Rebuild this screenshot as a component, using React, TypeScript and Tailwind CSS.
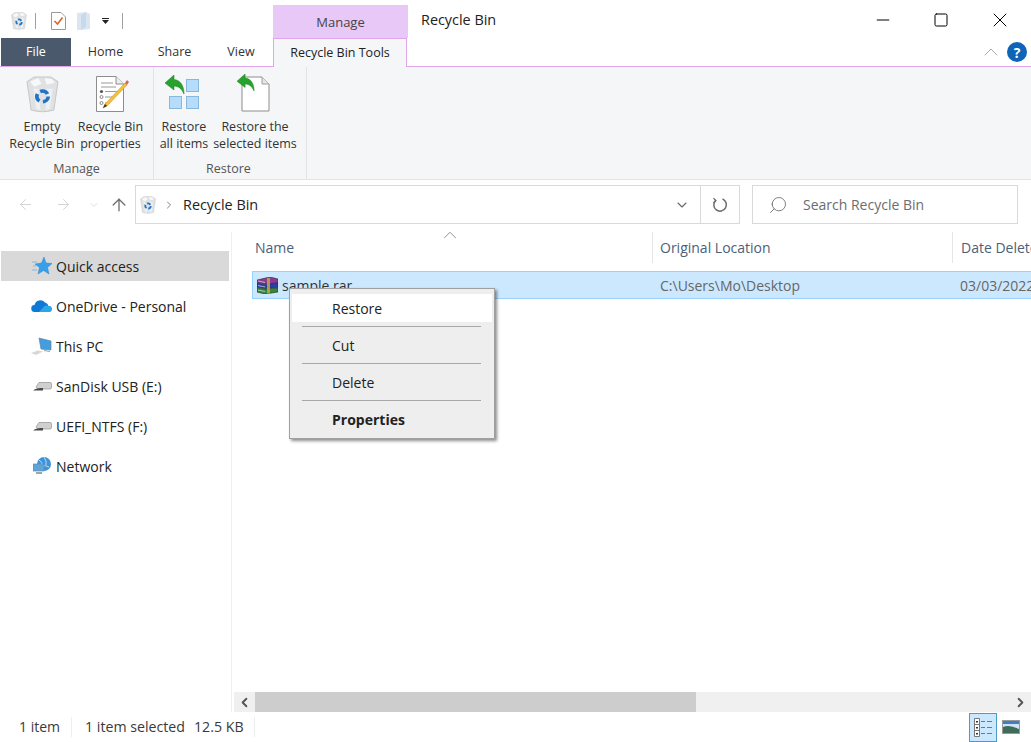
import React from "react";
import { ArrowLeft, ArrowRight, ArrowUp, ChevronDown, ChevronRight, ChevronLeft, ChevronUp, Search, X, Minus, Square } from "lucide-react";

const FONT = "font-['Open_Sans','Noto_Sans',sans-serif]";

const RecycleBin: React.FC<{ w: number; h: number }> = ({ w, h }) => (
  <svg width={w} height={h} viewBox="0 0 32 38" preserveAspectRatio="none">
    <path d="M1 6 L8 1 L24 1 L31 6 L27 35 Q16 38.5 5 35 Z" fill="#dfe1e3" stroke="#c6c8ca" strokeWidth="1" />
    <path d="M4 6 L12 2 L15 8 L8 11 Z M18 2 L25 3 L28 7 L20 9 Z" fill="#f7f8f9" />
    <path d="M7 13 L10 34 L14 35 L12 13 Z M20 13 L19 35 L23 34 L26 13 Z" fill="#eff0f1" />
    <circle cx="16" cy="21" r="5.5" fill="none" stroke="#1f74c9" strokeWidth="3.6" strokeDasharray="8 3.5" />
  </svg>
);

const PropertiesIcon: React.FC = () => (
  <svg width="36" height="38" viewBox="0 0 36 38">
    <path d="M1.5 1.5 H21 L28.5 9 V36.5 H1.5 Z" fill="#fff" stroke="#8d8d8d" />
    <path d="M21 1.5 V9 H28.5" fill="#eee" stroke="#8d8d8d" />
    <path d="M6 8 H18 M6 12 H21 M10 16.5 H24 M10 22 H20 M10 28 H15" stroke="#9a9a9a" />
    <circle cx="6.5" cy="16.5" r="1.6" fill="#555" />
    <circle cx="6.5" cy="22" r="1.5" fill="#fff" stroke="#888" />
    <circle cx="6.5" cy="28" r="1.5" fill="#fff" stroke="#888" />
    <path d="M32 10 L12 31 L8 33 L10 29 L30 8 Z" fill="#f4c23c" stroke="#c9952a" strokeWidth="0.6" />
    <path d="M30 8 L32 10 L34 7 L32 5 Z" fill="#d9665f" />
    <path d="M10 29 L8 33 L12 31 Z" fill="#333" />
  </svg>
);

const GreenArrow: React.FC<{ w: number; h: number }> = ({ w, h }) => (
  <svg width={w} height={h} viewBox="0 0 20 20">
    <path d="M0 8 L9 0 L9 4.5 C15 5 19 10 19 19 C16.5 13.5 14 11.5 9 11 L9 15 Z" fill="#27a32d" stroke="#1c7f22" strokeWidth="0.5" />
  </svg>
);

const RibbonTile: React.FC = () => <span className="block w-[13px] h-[13px] bg-[#b5dcfb] border border-[#8ab8dd]" />;

const RibbonButton: React.FC<{ icon: React.ReactNode; lines: [string, string]; w: string }> = ({ icon, lines, w }) => (
  <div className={`flex flex-col items-center ${w}`}>
    <div className="h-[42px] flex items-center justify-center">{icon}</div>
    <span className="mt-[3px] text-[12.5px] leading-[17px] text-[#333] whitespace-nowrap">{lines[0]}</span>
    <span className="text-[12.5px] leading-[17px] text-[#333] whitespace-nowrap">{lines[1]}</span>
  </div>
);

const DriveIcon: React.FC = () => (
  <svg width="19" height="9" viewBox="0 0 19 9">
    <path d="M6 .5 H17 Q18.5 .5 18.5 2 V5.5 Q18.5 7 17 7 H5 L3 5 Z" fill="#d0d0d0" stroke="#909090" strokeWidth="0.7" />
    <path d="M0 8.5 Q3 5.5 10 6 V8.5 Z" fill="#4a4a4a" />
  </svg>
);

const sidebarItems: { label: string; icon: React.ReactNode }[] = [
  {
    label: "Quick access",
    icon: (
      <svg width="20" height="18" viewBox="0 0 20 18">
        <path d="M12 0 L14 6 L20 6.5 L15.5 10.5 L17 17 L11.5 13.5 L6 17 L7.5 10.5 L3 7 L9.5 6 Z" fill="#38a0ea" stroke="#2b86c8" strokeWidth="0.5" />
        <path d="M0 5 H5 M1 9 H4 M0 13 H5" stroke="#8bb8dc" />
      </svg>
    ),
  },
  {
    label: "OneDrive - Personal",
    icon: (
      <svg width="21" height="14" viewBox="0 0 21 14">
        <path d="M4 13 A3.5 3.5 0 0 1 3.5 6 A6 6 0 0 1 14 3.5 A4.5 4.5 0 0 1 17.5 7 A3 3 0 0 1 18 13 Z" fill="#0f78d4" />
        <path d="M8 13 L13.5 7 A4.5 4.5 0 0 1 17.5 7 A3 3 0 0 1 20.5 11 L19 13 Z" fill="#28a8ea" />
      </svg>
    ),
  },
  {
    label: "This PC",
    icon: (
      <svg width="21" height="18" viewBox="0 0 21 18">
        <path d="M8 1 L20 4 L20 13 L10 12 Z" fill="#3f9fe2" stroke="#6a8296" strokeWidth="0.7" />
        <path d="M0 16 L7 13.5 L12 14.5 L5 18 Z" fill="#d5d7d9" />
        <path d="M13 13 L19 14 L19 15 L13 14 Z" fill="#9aa0a5" />
      </svg>
    ),
  },
  { label: "SanDisk USB (E:)", icon: <DriveIcon /> },
  { label: "UEFI_NTFS (F:)", icon: <DriveIcon /> },
  {
    label: "Network",
    icon: (
      <svg width="19" height="18" viewBox="0 0 19 18">
        <circle cx="11" cy="7" r="7" fill="#3f93d6" />
        <path d="M6 3 Q10 5 9 9 Q13 8 16 10 M11 0 Q14 4 13 8" stroke="#b5dcf5" fill="none" />
        <rect x="0" y="7" width="11" height="7" fill="#5aa5dc" stroke="#6f8ba0" strokeWidth="0.7" />
        <path d="M3 16 H9" stroke="#9aa5ae" strokeWidth="2" />
      </svg>
    ),
  },
];

const RarIcon: React.FC = () => (
  <svg width="21" height="17" viewBox="0 0 21 17">
    <path d="M0 3 L13 0 L21 2 L21 6 L8 7 L0 5.5 Z" fill="#8a3c92" stroke="#2e2430" strokeWidth="0.6" />
    <path d="M0 6 L8 7.5 L21 6 L21 10.5 L8 11.5 L0 10 Z" fill="#2a3fa8" stroke="#22243a" strokeWidth="0.6" />
    <path d="M0 10.5 L8 12 L21 11 L21 15 L8 17 L0 15 Z" fill="#2f8a3a" stroke="#1f2a20" strokeWidth="0.6" />
    <path d="M10 1 H13 V16.5 H10 Z" fill="#c9a24a" opacity="0.85" />
    <path d="M1 4 L8 5.5 M1 8.5 L8 10 M1 13 L8 14.5" stroke="#e0e0e6" strokeWidth="0.7" />
  </svg>
);

export default function App() {
  return (
    <div className={`relative w-[1031px] h-[742px] bg-white overflow-hidden flex flex-col ${FONT} text-[14px]`}>
      {/* Title bar */}
      <div className="h-[38px] flex items-stretch shrink-0">
        <div className="w-[273px] flex items-center pl-[11px] pt-[3px]">
          <RecycleBin w={16} h={18} />
          <span className="ml-[8px] w-px h-[16px] bg-[#a0a0a0]" />
          <svg className="ml-[15px]" width="15" height="18" viewBox="0 0 15 18">
            <path d="M.5.5 H10 L14.5 5 V17.5 H.5 Z" fill="#fff" stroke="#9a9a9a" />
            <path d="M3.5 9 L6.5 12 L11.5 5.5" stroke="#e0602c" strokeWidth="1.6" fill="none" />
          </svg>
          <svg className="ml-[11px]" width="13" height="18" viewBox="0 0 13 18">
            <path d="M0 1 L9 0 L13 2 V17 L4 18 H0 Z" fill="#dce6f3" />
            <path d="M9 0 V15 L4 18 V3 Z" fill="#c9d9ec" />
          </svg>
          <svg className="ml-[12px]" width="7" height="6" viewBox="0 0 7 6">
            <path d="M0 0 H7 V1 H0 Z M0 2 H7 L3.5 6 Z" fill="#222" />
          </svg>
          <span className="ml-[13px] w-px h-[16px] bg-[#a0a0a0]" />
        </div>
        <div className="mt-[5px] pt-[2px] w-[135px] bg-[#e8c8f6] flex items-center justify-center text-[13px] text-[#444]">Manage</div>
        <div className="ml-[13px] flex items-center text-[14.4px] text-[#222] pt-[1px]">Recycle Bin</div>
        <div className="ml-auto flex items-center pr-[19px] pt-[1px]">
          <Minus size={20} strokeWidth={1.2} className="text-black" />
          <Square size={16} strokeWidth={1.5} className="ml-[40px] text-black" />
          <X size={24} strokeWidth={1} className="ml-[39px] text-black" />
        </div>
      </div>

      {/* Tabs */}
      <div className="h-[29px] flex shrink-0 border-b border-[#dfa6ea] pl-[1px] text-[12.5px] text-[#333]">
        <div className="w-[70px] h-[28px] pt-[1px] bg-[#4a5a6c] text-white flex items-center justify-center">File</div>
        <div className="w-[69px] pt-[1px] flex items-center justify-center">Home</div>
        <div className="w-[69px] pt-[1px] flex items-center justify-center">Share</div>
        <div className="w-[64px] pt-[1px] flex items-center justify-center">View</div>
        <div className="w-[134px] h-[29px] bg-[#f5f6f7] border-x border-t border-[#dfa6ea] flex items-center justify-center text-[#222]">Recycle Bin Tools</div>
        <div className="ml-auto flex items-center pr-[4px]">
          <ChevronUp size={24} strokeWidth={1} className="text-[#aaa]" />
          <span className="ml-[4px] w-[20px] h-[20px] rounded-full bg-[#0f64b8] text-white text-[14px] font-bold flex items-center justify-center">?</span>
        </div>
      </div>

      {/* Ribbon */}
      <div className="h-[113px] shrink-0 flex bg-[#f5f6f7] border-b border-[#e4e4e4]">
        <div className="w-[154px] pt-[6px] pb-[2px] flex flex-col items-center border-r border-[#e2e3e4]">
          <div className="flex w-full pl-[9px]">
            <RibbonButton w="w-[66px]" icon={<RecycleBin w={33} h={37} />} lines={["Empty", "Recycle Bin"]} />
            <RibbonButton w="w-[71px]" icon={<div className="ml-[5px]"><PropertiesIcon /></div>} lines={["Recycle Bin", "properties"]} />
          </div>
          <span className="mt-auto text-[12.5px] text-[#555] leading-[17px]">Manage</span>
        </div>
        <div className="w-[153px] pt-[6px] pb-[2px] pr-[3px] flex flex-col items-center border-r border-[#e2e3e4]">
          <div className="flex w-full pl-[3px]">
            <RibbonButton
              w="w-[54px]"
              lines={["Restore", "all items"]}
              icon={
                <div className="relative w-[40px] h-[36px]">
                  <div className="absolute right-[5px] bottom-[3px] grid grid-cols-2 gap-[4px]">
                    <span className="block w-[13px] h-[13px]" />
                    <RibbonTile />
                    <RibbonTile />
                    <RibbonTile />
                  </div>
                  <div className="absolute left-[1px] -top-[1px]">
                    <GreenArrow w={20} h={20} />
                  </div>
                </div>
              }
            />
            <RibbonButton
              w="w-[88px]"
              lines={["Restore the", "selected items"]}
              icon={
                <div className="relative w-[36px] h-[38px]">
                  <svg className="absolute right-[3px] bottom-[1px]" width="29" height="36" viewBox="0 0 29 36">
                    <path d="M1 1 H21 L28 8 V35 H1 Z" fill="#fff" stroke="#8d8d8d" />
                    <path d="M21 1 V8 H28" fill="#e6e6e6" stroke="#a0a0a0" />
                  </svg>
                  <div className="absolute left-0 -top-[1px]">
                    <GreenArrow w={18} h={18} />
                  </div>
                </div>
              }
            />
          </div>
          <span className="mt-auto text-[12.5px] text-[#555] leading-[17px]">Restore</span>
        </div>
      </div>

      {/* Address row */}
      <div className="h-[52px] shrink-0 flex items-start pt-[5px] pl-[17px]">
        <div className="h-[39px] w-[118px] flex items-center">
          <ArrowLeft size={17} strokeWidth={1.4} className="text-[#d2d2d2]" />
          <ArrowRight size={17} strokeWidth={1.4} className="ml-[21px] text-[#d2d2d2]" />
          <ChevronDown size={12} strokeWidth={1.4} className="ml-[16px] text-[#d2d2d2]" />
          <ArrowUp size={20} strokeWidth={1.6} className="ml-[9px] text-[#707070]" />
        </div>
        <div className="h-[39px] w-[605px] border border-[#d9d9d9] flex items-center pl-[4px]">
          <RecycleBin w={16} h={18} />
          <ChevronRight size={12} strokeWidth={1.5} className="ml-[7px] text-[#555]" />
          <span className="ml-[8px] text-[14.4px] text-[#222]">Recycle Bin</span>
          <ChevronDown size={16} strokeWidth={1.6} className="ml-auto mr-[10px] text-[#666]" />
          <div className="w-[39px] h-full border-l border-[#d9d9d9] flex items-center justify-center">
            <svg width="16" height="16" viewBox="0 0 16 16" fill="none" stroke="#6a6a6a" strokeWidth="1.5">
              <path d="M10.5 2 A6.3 6.3 0 1 1 3.6 3.4" />
              <path d="M1.5 1.2 L4 3.6 L1.5 6" strokeWidth="1.2" />
            </svg>
          </div>
        </div>
        <div className="ml-[12px] h-[39px] w-[266px] border border-[#d9d9d9] flex items-center pl-[15px]">
          <Search size={20} strokeWidth={1} className="text-[#666] -scale-x-100" />
          <span className="ml-[15px] text-[14px] text-[#6d6d6d]">Search Recycle Bin</span>
        </div>
      </div>

      {/* Body */}
      <div className="flex-1 min-h-0 flex">
        <div className="w-[232px] shrink-0 border-r border-[#f0f0f0] pt-[19px] pl-[1px] pr-[2px]">
          {sidebarItems.map((item, i) => (
            <div key={item.label} className={`h-[30px] mb-[10px] flex items-center ${i === 0 ? "bg-[#d9d9d9]" : ""}`}>
              <div className="w-[55px] flex justify-end pr-[4px] shrink-0">{item.icon}</div>
              <span className="text-[14px] text-[#222]">{item.label}</span>
            </div>
          ))}
        </div>
        <div className="flex-1 min-w-0 flex flex-col relative">
          <div className="flex-1 min-h-0 pl-[20px] overflow-hidden">
            <div className="relative flex h-[31px] items-center text-[14px] text-[#4c607a] w-[900px]">
              <ChevronUp size={22} strokeWidth={1} className="absolute left-[187px] -top-[8px] text-[#888]" />
              <div className="w-[401px] h-full pl-[3px] flex items-center border-r border-[#e5e5e5] shrink-0">Name</div>
              <div className="w-[300px] h-full pl-[7px] flex items-center border-r border-[#e5e5e5] shrink-0">Original Location</div>
              <div className="pl-[8px] whitespace-nowrap">Date Deleted</div>
            </div>
            <div className="mt-[8px] h-[28px] w-[820px] bg-[#cce8ff] border-y border-l border-[#99d1ff] flex items-center text-[14px] text-[#666]">
              <div className="w-[400px] flex items-center pl-[4px] shrink-0 text-[#333]">
                <RarIcon />
                <span className="ml-[4px]">sample.rar</span>
              </div>
              <div className="w-[300px] pl-[7px] shrink-0">C:\Users\Mo\Desktop</div>
              <div className="pl-[7px] whitespace-nowrap">03/03/2022 12:00</div>
            </div>
          </div>
          <div className="h-[20px] shrink-0 ml-[2px] flex items-center bg-[#f0f0f0]">
            <div className="w-[21px] flex justify-center"><ChevronLeft size={15} strokeWidth={3} className="text-[#555]" /></div>
            <div className="w-[441px] h-full bg-[#cdcdcd]" />
            <div className="ml-auto w-[22px] flex justify-center"><ChevronRight size={15} strokeWidth={3} className="text-[#555]" /></div>
          </div>
        </div>
      </div>

      {/* Status bar */}
      <div className="h-[30px] shrink-0 flex items-center text-[14px] text-[#3a3a3a]">
        <span className="pl-[19px] w-[72px] h-[20px] leading-[20px] border-r border-[#eee]">1 item</span>
        <span className="ml-[13px] w-[170px] h-[20px] flex leading-[20px] border-r border-[#eee] whitespace-nowrap">
          <span className="text-[14.2px]">1 item selected</span>
          <span className="ml-[9px] text-[14.2px]">12.5 KB</span>
        </span>
        <div className="ml-auto flex items-center pr-[11px]">
          <div className="w-[28px] h-[29px] bg-[#cce8ff] border border-[#4d9cc6] flex items-center justify-center">
            <svg width="18" height="19" viewBox="0 0 18 19">
              <path d="M.5.5 H5.5 V18.5 H.5 Z M.5 6.5 H5.5 M.5 12.5 H5.5" fill="#fff" stroke="#777" />
              <path d="M2 3 H4 V4.5 H2 Z M2 9 H4 V10.5 H2 Z M2 15 H4 V16.5 H2 Z" fill="#333" />
              <path d="M7 3.5 H11 M13 3.5 H18 M7 9.5 H11 M13 9.5 H18 M7 15.5 H11 M13 15.5 H18" stroke="#777" />
            </svg>
          </div>
          <div className="ml-[5px] w-[18px] h-[14px] border border-[#999] overflow-hidden">
            <svg width="16" height="12" viewBox="0 0 16 12" className="block">
              <rect width="16" height="12" fill="#cfe3f5" />
              <path d="M0 3 H16 V0 H0 Z" fill="#3d7fc7" />
              <path d="M0 6 Q6 3 16 8 V12 H0 Z" fill="#3f6b5a" />
            </svg>
          </div>
        </div>
      </div>

      {/* Context menu */}
      <div className="absolute left-[289px] top-[288px] w-[206px] h-[151px] bg-[#eeeeee] border border-[#a0a0a0] shadow-[2px_2px_3px_rgba(0,0,0,0.45)] pt-[5px] px-[2px] text-[14px] text-[#222]">
        <div className="h-[28px] bg-white flex items-center pl-[40px]">Restore</div>
        <div className="mt-[4px] ml-[10px] mr-[11px] h-px bg-[#a8a8a8]" />
        <div className="h-[36px] flex items-center pl-[40px]">Cut</div>
        <div className="ml-[10px] mr-[11px] h-px bg-[#a8a8a8]" />
        <div className="h-[36px] flex items-center pl-[40px]">Delete</div>
        <div className="ml-[10px] mr-[11px] h-px bg-[#a8a8a8]" />
        <div className="h-[36px] flex items-center pl-[40px] font-bold">Properties</div>
      </div>
    </div>
  );
}
